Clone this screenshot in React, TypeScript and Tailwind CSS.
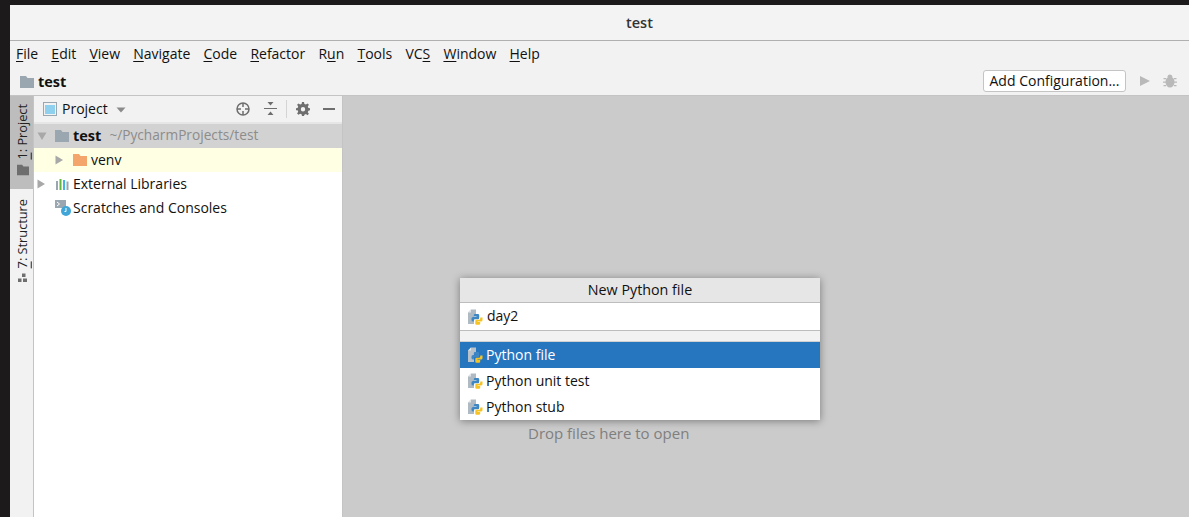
import React from "react";

const PyIcon = ({ white }: { white?: boolean }) => (
  <svg width="16" height="16" viewBox="0 0 16 16" className="shrink-0">
    <path d="M1 3.500L4 0.500H9V6H7V15H1z" fill={white ? "#b9c2ca" : "#b0bac2"} />
    <path d="M1 3.500H4V0.500z" fill="#e2e6e9" />
    <path d="M8 5h3a1.200 1.200 0 0 1 1.200 1.200V9a1.200 1.200 0 0 1-1.200 1.200H8A1.200 1.200 0 0 0 6.800 11.400V12.500H5.800A1.500 1.500 0 0 1 4.500 11V9.500A1.500 1.500 0 0 1 6 8h3.500V7.500H6.800V6.200A1.200 1.200 0 0 1 8 5z" fill="#3f87c4" />
    <path d="M15.500 8.500V11a1.500 1.500 0 0 1-1.500 1.500h-3.500V13h2.700v1.500A1.200 1.200 0 0 1 12 15.700H9.500A1.200 1.200 0 0 1 8.300 14.500V12A1.200 1.200 0 0 1 9.500 10.800H12A1.200 1.200 0 0 0 13.200 9.600V8.500z" fill="#f6c324" />
  </svg>
);

const Folder = ({ color, w = 14 }: { color: string; w?: number }) => (
  <svg width={w} height="12" viewBox="0 0 14 12" className="shrink-0">
    <path d="M0 0h6l1.500 2H14v10H0z" fill={color} />
  </svg>
);

const Arrow = ({ dir, color = "#a8a8a8" }: { dir: "right" | "down"; color?: string }) => (
  <svg width="10" height="10" viewBox="0 0 10 10" className="shrink-0">
    <path d={dir === "right" ? "M1.500 0.500L9 5L1.500 9.500z" : "M0.500 1.500H9.500L5 9z"} fill={color} />
  </svg>
);

const menu: [string, string, string][] = [
  ["", "F", "ile"],
  ["", "E", "dit"],
  ["", "V", "iew"],
  ["", "N", "avigate"],
  ["", "C", "ode"],
  ["", "R", "efactor"],
  ["R", "u", "n"],
  ["", "T", "ools"],
  ["VC", "S", ""],
  ["", "W", "indow"],
  ["", "H", "elp"],
];

const Row = ({ children, className = "" }: { children: React.ReactNode; className?: string }) => (
  <div className={`flex items-center h-6 ${className}`}>{children}</div>
);

const PopupRow = ({ label, selected }: { label: string; selected?: boolean }) => (
  <div className={`h-[26px] flex items-center pl-[7px] gap-[3px] ${selected ? "bg-[#2675bf] text-white" : "text-[#111]"}`}>
    <PyIcon white={selected} />
    <span className="-mt-[1px]">{label}</span>
  </div>
);

const SideLabel = ({ n, text }: { n: string; text: string }) => (
  <span className="[writing-mode:vertical-rl] rotate-180 text-[12.75px] leading-none text-[#222]">
    <span className="border-l border-[#222]">{n}</span>: {text}
  </span>
);

export default function App() {
  return (
    <div
      className="relative w-[1189px] h-[517px] overflow-hidden bg-[#1c1a1a] pl-[10px] pt-[5px] text-[14px] text-[#111]"
      style={{ fontFamily: '"Open Sans", sans-serif' }}
    >
      <div className="w-full h-full flex flex-col bg-[#f2f2f2] rounded-tl-[6px]">
        <div className="h-[36px] shrink-0 flex items-center border-b border-[#b0b0b0] bg-[#f3f3f3] pl-[616px]">
          <span className="font-semibold text-[14.5px] text-[#333]">test</span>
        </div>

        <div className="h-[27px] shrink-0 flex items-center gap-[13.2px] pl-[6px]">
          {menu.map(([a, u, b]) => (
            <span key={a + u + b} className="-mt-[3px]">
              {a}
              <span className="underline underline-offset-2">{u}</span>
              {b}
            </span>
          ))}
        </div>

        <div className="h-[28px] shrink-0 flex items-center pl-[10px] pr-[12px] border-b border-[#c4c4c4]">
          <Folder color="#9aa7b0" />
          <span className="ml-[4px] font-bold text-[14.5px]">test</span>
          <div className="ml-auto flex items-center -mt-[2px]">
            <div className="h-[22px] w-[143px] flex items-center justify-center bg-white border border-[#c4c4c4] rounded-[3px]">
              Add Configuration...
            </div>
            <svg width="12" height="12" viewBox="0 0 12 12" className="ml-[13px]">
              <path d="M1 1l10 5-10 5z" fill="#b9b9b9" />
            </svg>
            <svg width="14" height="14" viewBox="0 0 14 14" className="ml-[12px]">
              <g fill="#b9b9b9">
                <ellipse cx="7" cy="8" rx="4.500" ry="5.500" />
                <path d="M4.500 3a2.500 2.500 0 0 1 5 0z" />
                <path d="M0.500 4h2.500v1.200H0.500zM11 4h2.500v1.200H11zM0 7.500h3v1.200H0zM11 7.500h3v1.200h-3zM0.500 11h2.500v1.200H0.500zM11 11h2.500v1.200H11z" />
              </g>
            </svg>
          </div>
        </div>

        <div className="flex-1 flex min-h-0">
          <div className="w-[24px] shrink-0 flex flex-col border-r border-[#c4c4c4] bg-[#f2f2f2]">
            <div className="h-[93px] bg-[#bdbdbd] flex flex-col items-center justify-end pl-[2px] pb-[13px] gap-[4px]">
              <SideLabel n="1" text="Project" />
              <Folder color="#6e6e6e" w={12} />
            </div>
            <div className="flex flex-col items-center pl-[2px] pt-[10px] gap-[5px]">
              <SideLabel n="7" text="Structure" />
              <svg width="10" height="10" viewBox="0 0 10 10">
                <path d="M4 0.500h3.500v3.500H4zM0 5.500h3.500V9H0zM5 5.500h4V9H5z" fill="#6e6e6e" />
              </svg>
            </div>
          </div>

          <div className="w-[309px] shrink-0 flex flex-col bg-white border-r border-[#c4c4c4]">
            <div className="h-[28px] shrink-0 flex items-center bg-[#f2f2f2] border-b-2 border-[#e6e6e6] pl-[9px] pr-[7px] pb-[1px]">
              <svg width="14" height="14" viewBox="0 0 14 14">
                <rect x="0.500" y="0.500" width="13" height="13" fill="#f2f2f2" stroke="#9aa7b0" />
                <rect x="2" y="3" width="10" height="9" fill="#8fd0ee" />
              </svg>
              <span className="ml-[5px] -mt-[1px]">Project</span>
              <svg width="10" height="6" viewBox="0 0 10 6" className="ml-[8px] mt-[2px]">
                <path d="M0.500 0.500h9L5 5.500z" fill="#8a8a8a" />
              </svg>
              <div className="ml-auto flex items-center">
                <svg width="14" height="14" viewBox="0 0 14 14" fill="none" stroke="#6e6e6e">
                  <circle cx="7" cy="7" r="6" strokeWidth="1.500" />
                  <path d="M7 1v4M7 9v4M1 7h4M9 7h4" strokeWidth="1.500" />
                </svg>
                <svg width="13" height="13" viewBox="0 0 13 13" className="ml-[14px]">
                  <path d="M0 6h13v1H0z" fill="#6e6e6e" />
                  <path d="M3.500 0h6L6.500 3.500zM6.500 9.500l3 3.500h-6z" fill="#6e6e6e" />
                </svg>
                <div className="w-px h-[18px] bg-[#d4d4d4] ml-[9px] mr-[9px]" />
                <svg width="14" height="14" viewBox="0 0 14 14" fillRule="evenodd">
                  <path
                    d="M6 0h2l.4 1.900 1.500.6L11.500 1.400 12.900 2.800 11.800 4.400l.6 1.500L14 6.300v2l-1.600.4-.6 1.500 1.100 1.600-1.400 1.400-1.600-1.100-1.500.6L8 14H6l-.4-1.700-1.500-.6-1.600 1.100-1.400-1.400 1.100-1.600-.6-1.500L0 8.300v-2l1.600-.4.600-1.500L1.100 2.800 2.500 1.400l1.600 1.100 1.500-.6zM7 5a2.200 2.200 0 1 0 0 4.400A2.200 2.200 0 0 0 7 5z"
                    fill="#6e6e6e"
                  />
                </svg>
                <div className="w-[12px] h-[2px] bg-[#6e6e6e] ml-[13px]" />
              </div>
            </div>

            <div className="flex-1 flex flex-col">
              <Row className="bg-[#d2d2d2] pl-[3px]">
                <Arrow dir="down" />
                <span className="ml-[8px]"><Folder color="#9aa7b0" /></span>
                <span className="ml-[4px] font-bold text-[14.5px] -mt-[1px]">test</span>
                <span className="ml-[8px] text-[#8c8c8c] text-[13.7px] -mt-[1px]">~/PycharmProjects/test</span>
              </Row>
              <Row className="bg-[#ffffe4] pl-[20px]">
                <Arrow dir="right" />
                <span className="ml-[9px]"><Folder color="#f4a56c" /></span>
                <span className="ml-[4px] -mt-[1px]">venv</span>
              </Row>
              <Row className="pl-[2px]">
                <Arrow dir="right" />
                <svg width="14" height="12" viewBox="0 0 14 12" className="ml-[9px]">
                  <path d="M1 3h2v9H1z" fill="#9aa7b0" />
                  <path d="M4.500 1h2v11h-2z" fill="#62b543" />
                  <path d="M8 2h2v10H8z" fill="#40b6e0" />
                  <path d="M11.500 3.500h2V12h-2z" fill="#9aa7b0" />
                </svg>
                <span className="ml-[4px] -mt-[2px]">External Libraries</span>
              </Row>
              <Row className="pl-[21px]">
                <svg width="16" height="16" viewBox="0 0 16 16" className="shrink-0">
                  <path d="M0 0h11v8H0z" fill="#9aa7b0" />
                  <path d="M2 2l2.500 2L2 6" stroke="#fff" fill="none" />
                  <circle cx="11" cy="11" r="5" fill="#40a6d8" />
                  <path d="M11 8v3.500H9.500" stroke="#fff" fill="none" />
                </svg>
                <span className="ml-[2px] -mt-[2px]">Scratches and Consoles</span>
              </Row>
            </div>
          </div>

          <div className="flex-1 bg-[#cbcbcb] pl-[185px] pt-[326px] text-[15px] text-[#7f7f7f]">
            Drop files here to open
          </div>
        </div>
      </div>

      <div className="absolute left-[460px] top-[278px] w-[360px] h-[142px] bg-white shadow-[0_1px_8px_rgba(0,0,0,0.4)] flex flex-col">
        <div className="h-[25px] shrink-0 bg-[#e6e6e6] border-b border-[#bdbdbd] flex items-center justify-center text-[14.3px]">
          New Python file
        </div>
        <div className="h-[28px] shrink-0 flex items-center pl-[7px] gap-[4px] border-b border-[#bdbdbd]">
          <PyIcon />
          <span className="-mt-[3px]">day2</span>
        </div>
        <div className="h-[11px] shrink-0 bg-[#f2f2f2] border-b border-[#d0d0d0]" />
        <PopupRow label="Python file" selected />
        <PopupRow label="Python unit test" />
        <PopupRow label="Python stub" />
      </div>
    </div>
  );
}
